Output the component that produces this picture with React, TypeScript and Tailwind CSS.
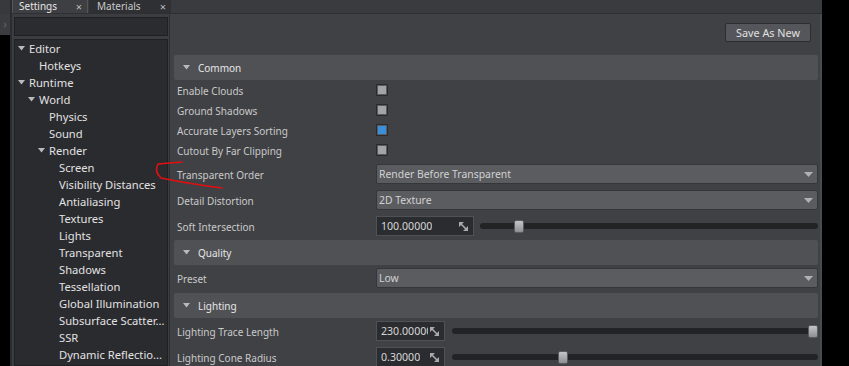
import React from 'react';

const font = { fontFamily: '"Noto Sans", "Open Sans", sans-serif' };

type TreeItem = { label: string; depth: number; open?: boolean };

const tree: TreeItem[] = [
  { label: 'Editor', depth: 0, open: true },
  { label: 'Hotkeys', depth: 1 },
  { label: 'Runtime', depth: 0, open: true },
  { label: 'World', depth: 1, open: true },
  { label: 'Physics', depth: 2 },
  { label: 'Sound', depth: 2 },
  { label: 'Render', depth: 2, open: true },
  { label: 'Screen', depth: 3 },
  { label: 'Visibility Distances', depth: 3 },
  { label: 'Antialiasing', depth: 3 },
  { label: 'Textures', depth: 3 },
  { label: 'Lights', depth: 3 },
  { label: 'Transparent', depth: 3 },
  { label: 'Shadows', depth: 3 },
  { label: 'Tessellation', depth: 3 },
  { label: 'Global Illumination', depth: 3 },
  { label: 'Subsurface Scatter...', depth: 3 },
  { label: 'SSR', depth: 3 },
  { label: 'Dynamic Reflectio...', depth: 3 },
];

const indent = ['pl-[3px]', 'pl-[13px]', 'pl-[23px]', 'pl-[33px]'];

function Tri({ className = '' }: { className?: string }) {
  return (
    <svg width="7" height="5" viewBox="0 0 7 5" className={className}>
      <path d="M0 0 H7 L3.5 4.5 Z" fill="#b9babd" />
    </svg>
  );
}

function Section({ title }: { title: string }) {
  return (
    <div className="ml-[4px] mr-[2px] h-[25px] rounded-[2px] bg-[#505155] flex items-center pl-[9px] gap-[8px] text-[10px] text-[#e6e6e6]">
      <Tri />
      <span className="pt-[2px]">{title}</span>
    </div>
  );
}

function Row({ label, children }: { label: string; children?: React.ReactNode }) {
  return (
    <div className="flex items-center h-[20px] pl-[7px] pr-[2px]">
      <div className="w-[199px] shrink-0 pt-[2px] text-[10px] text-[#c9c9c9] whitespace-nowrap">{label}</div>
      <div className="flex-1 flex items-center">{children}</div>
    </div>
  );
}

function Check({ on }: { on?: boolean }) {
  return (
    <div className="w-[12px] h-[12px] border border-[#2a2b2e] bg-[#595a5e] flex items-center justify-center">
      <div className={`w-[8px] h-[8px] ${on ? 'bg-[#3a8fd9]' : 'bg-[#a3a4a7]'}`} />
    </div>
  );
}

function Select({ value }: { value: string }) {
  return (
    <div className="flex-1 h-[20px] rounded-[2px] bg-[#5b5c60] border border-[#35363a] flex items-center justify-between pl-[2px] pr-[4px] text-[10.4px] text-[#d2d2d2]">
      <span className="pt-[2px]">{value}</span>
      <svg width="9" height="5" viewBox="0 0 9 5">
        <path d="M0 0 H9 L4.5 5 Z" fill="#b0b1b4" />
      </svg>
    </div>
  );
}

function NumInput({ value, w }: { value: string; w: string }) {
  return (
    <div className={`${w} h-[20px] shrink-0 bg-[#2b2c30] border border-[#505156] flex items-center justify-between pl-[4px] pr-[5px] text-[10.6px] text-[#d6d6d6] overflow-hidden`}>
      <span className="pt-[2px] whitespace-nowrap overflow-hidden">{value}</span>
      <svg width="9" height="9" viewBox="0 0 9 9" className="shrink-0 ml-[2px]">
        <path d="M0 0 H5 L0 5 Z M9 9 H4 L9 4 Z" fill="#a9aaad" />
        <path d="M1 1 L8 8" stroke="#a9aaad" strokeWidth="1.6" />
      </svg>
    </div>
  );
}

function Slider({ pos, gap }: { pos: number; gap: string }) {
  return (
    <div className={`flex-1 relative h-[20px] flex items-center ${gap}`}>
      <div className="w-full h-[6px] rounded-full bg-[#222325]" />
      <div
        className="absolute top-[4px] w-[10px] h-[13px] rounded-[2px] bg-gradient-to-b from-[#c4c5c7] to-[#8e8f92] border border-[#5a5b5e]"
        style={{ left: `calc(${pos}% - 5px)` }}
      />
    </div>
  );
}

export default function App() {
  return (
    <div className="w-[849px] h-[366px] overflow-hidden bg-black flex relative" style={font}>
      {/* left collapsed strip */}
      <div className="w-[10px] shrink-0 flex flex-col">
        <div className="h-[14px] bg-[#38393d]" />
        <div className="h-[21px] bg-[#3b3c40] flex items-center justify-center text-[#6a6b6e] text-[10px]">›</div>
        <div className="flex-1 bg-black" />
      </div>
      <div className="w-[2px] shrink-0 bg-[#2b2c2f]" />

      <div className="w-[810px] shrink-0 flex flex-col">
        {/* tabs */}
        <div className="h-[14px] shrink-0 flex bg-[#3a3b3f] border-b border-[#2e2f32]">
          <div className="w-[76px] flex items-start justify-between bg-[#3e3f43] border-x border-[#55565a] pl-[6px] pr-[5px] text-[10px] leading-[13px] text-[#e6e6e6]">
            <span>Settings</span>
            <span className="text-[11px] text-[#bdbdbd]">×</span>
          </div>
          <div className="w-[82px] ml-[1px] flex items-start justify-between bg-[#2f3034] pl-[8px] pr-[5px] text-[10px] leading-[13px] text-[#c8c8c8]">
            <span>Materials</span>
            <span className="text-[11px] text-[#bdbdbd]">×</span>
          </div>
        </div>

        <div className="flex-1 flex min-h-0">
          {/* left tree column */}
          <div className="w-[158px] shrink-0 bg-[#3c3d41] border-r border-[#2e2f32] pt-[3px] pl-[2px] flex flex-col gap-[3px]">
            <div className="w-[154px] h-[19px] shrink-0 bg-[#2b2c30] border border-[#1f2023]" />
            <div className="w-[154px] flex-1 bg-[#2a2b2f] border border-[#1f2023]">
              {tree.map((t) => (
                <div key={t.label} className={`h-[17px] flex items-center ${indent[t.depth]} text-[11.2px] text-[#e2e2e2] whitespace-nowrap`}>
                  <div className="w-[11px] shrink-0 flex items-center">{t.open && <Tri />}</div>
                  <span className="pt-[2px]">{t.label}</span>
                </div>
              ))}
            </div>
          </div>

          {/* settings panel */}
          <div className="flex-1 bg-[#404145] flex flex-col pt-[9px]">
            <div className="flex justify-end pr-[9px]">
              <div className="h-[19px] w-[86px] rounded-[2px] bg-[#55565b] border border-[#2c2d30] flex items-center justify-center text-[10.8px] text-[#e0e0e0]">
                <span className="pt-[1px]">Save As New</span>
              </div>
            </div>
            <div className="pt-[13px] flex flex-col">
              <Section title="Common" />
              <div>
                <Row label="Enable Clouds"><Check /></Row>
                <Row label="Ground Shadows"><Check /></Row>
                <Row label="Accurate Layers Sorting"><Check on /></Row>
                <Row label="Cutout By Far Clipping"><Check /></Row>
              </div>
              <div className="flex flex-col gap-[6px] pt-[4px]">
                <Row label="Transparent Order"><Select value="Render Before Transparent" /></Row>
                <Row label="Detail Distortion"><Select value="2D Texture" /></Row>
                <Row label="Soft Intersection">
                  <NumInput value="100.00000" w="w-[98px]" />
                  <Slider pos={11.5} gap="ml-[6px]" />
                </Row>
              </div>
              <div className="pt-[4px]"><Section title="Quality" /></div>
              <div className="pt-[3px] pb-[5px]">
                <Row label="Preset"><Select value="Low" /></Row>
              </div>
              <Section title="Lighting" />
              <div className="flex flex-col gap-[6px] pt-[3px]">
                <Row label="Lighting Trace Length">
                  <NumInput value="230.00000" w="w-[69px]" />
                  <Slider pos={98.5} gap="ml-[7px]" />
                </Row>
                <Row label="Lighting Cone Radius">
                  <NumInput value="0.30000" w="w-[69px]" />
                  <Slider pos={30.4} gap="ml-[7px]" />
                </Row>
              </div>
            </div>
          </div>
          <div className="w-[2px] shrink-0 bg-[#4a4b4f]" />
        </div>
      </div>

      {/* red annotation stroke */}
      <svg className="absolute left-0 top-0 pointer-events-none" width="849" height="366">
        <path d="M182 162 L158 164 Q154 172 161 178 Q190 184 222 188" fill="none" stroke="#e01010" strokeWidth="1.6" strokeLinecap="round" />
      </svg>
    </div>
  );
}
